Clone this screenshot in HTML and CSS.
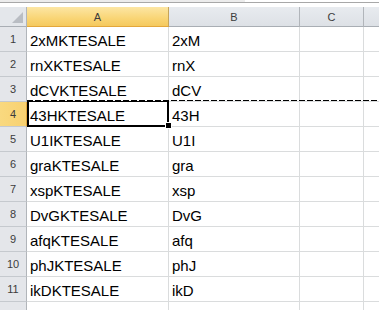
FILE: index.html
```html
<!DOCTYPE html>
<html>
<head>
<meta charset="utf-8">
<link rel="stylesheet" href="styles.css">
</head>
<body>
<div class="topstrip"><div class="tab"></div><div class="rest"></div></div>
<div class="sheet">
  <div class="grid">
    <div class="corner"><span class="tri"></span></div>
    <div class="ch sel">A</div>
    <div class="ch">B</div>
    <div class="ch">C</div>
    <div class="ch last"></div>

    <div class="rh">1</div><div class="c">2xMKTESALE</div><div class="c">2xM</div><div class="c"></div><div class="c last"></div>
    <div class="rh">2</div><div class="c">rnXKTESALE</div><div class="c">rnX</div><div class="c"></div><div class="c last"></div>
    <div class="rh">3</div><div class="c">dCVKTESALE</div><div class="c">dCV</div><div class="c"></div><div class="c last"></div>
    <div class="rh sel">4</div><div class="c active">43HKTESALE<span class="cursor"></span><span class="handle"></span></div><div class="c">43H</div><div class="c"></div><div class="c last"></div>
    <div class="rh">5</div><div class="c">U1IKTESALE</div><div class="c">U1I</div><div class="c"></div><div class="c last"></div>
    <div class="rh">6</div><div class="c">graKTESALE</div><div class="c">gra</div><div class="c"></div><div class="c last"></div>
    <div class="rh">7</div><div class="c">xspKTESALE</div><div class="c">xsp</div><div class="c"></div><div class="c last"></div>
    <div class="rh">8</div><div class="c">DvGKTESALE</div><div class="c">DvG</div><div class="c"></div><div class="c last"></div>
    <div class="rh">9</div><div class="c">afqKTESALE</div><div class="c">afq</div><div class="c"></div><div class="c last"></div>
    <div class="rh">10</div><div class="c">phJKTESALE</div><div class="c">phJ</div><div class="c"></div><div class="c last"></div>
    <div class="rh">11</div><div class="c">ikDKTESALE</div><div class="c">ikD</div><div class="c"></div><div class="c last"></div>
    <div class="rh empty"></div><div class="c empty"></div><div class="c empty"></div><div class="c empty"></div><div class="c last empty"></div>
  </div>
  <div class="marquee"></div>
</div>
</body>
</html>
```

FILE: styles.css
```css
html, body {
  margin: 0;
  padding: 0;
  background: #ffffff;
  overflow: hidden;
}
body {
  width: 379px;
  height: 310px;
  font-family: "Liberation Sans", Arial, sans-serif;
}
.topstrip {
  height: 7px;
  display: flex;
  background: #ffffff;
}
.topstrip .tab {
  width: 245px;
  height: 2px;
  background: #ececec;
  border-bottom: 1px solid #a8a8a8;
}
.topstrip .rest {
  flex: 1;
  height: 2px;
  background: #ffffff;
  border-bottom: 1px solid #a8a8a8;
}
.sheet {
  position: relative;
}
.grid {
  display: grid;
  grid-template-columns: 27px 142px 131px 64px 1fr;
  grid-template-rows: 20px repeat(11, 25px) 8px;
}
.grid > div {
  box-sizing: border-box;
}
.grid > .empty {
  border-bottom: none;
}
.corner {
  position: relative;
  background: #e4e7eb;
  border-right: 1px solid #b1b5ba;
  border-bottom: 1px solid #a9aeb4;
}
.corner .tri {
  position: absolute;
  right: 3px;
  bottom: 3px;
  width: 0;
  height: 0;
  border-left: 11px solid transparent;
  border-bottom: 11px solid #b9bdc3;
}
.ch {
  background: linear-gradient(#e8ebef, #dde1e6);
  border-right: 1px solid #b1b5ba;
  border-bottom: 1px solid #a9aeb4;
  font-size: 11px;
  color: #3c3c3c;
  display: flex;
  align-items: center;
  justify-content: center;
  padding-top: 1px;
}
.ch.sel {
  background: linear-gradient(#fce6a4, #f9d575 60%, #f5c95e);
  border-bottom: 1px solid #e3a73b;
  border-right: 1px solid #c5a45a;
}
.ch.last {
  border-right: none;
}
.rh {
  background: #e4e6ea;
  border-right: 1px solid #b1b5ba;
  border-bottom: 1px solid #c5c9ce;
  font-size: 11px;
  color: #3c3c3c;
  display: flex;
  align-items: flex-end;
  justify-content: center;
  line-height: 13px;
  padding-bottom: 5px;
}
.rh.sel {
  background: linear-gradient(90deg, #f9d97f, #f8d171);
  border-right: 1px solid #e3a73b;
}
.c {
  border-right: 1px solid #dadcdd;
  border-bottom: 1px solid #dadcdd;
  font-size: 15px;
  color: #000000;
  line-height: 17px;
  padding: 0 0 2px 3px;
  display: flex;
  align-items: flex-end;
  white-space: nowrap;
}
.c.last {
  border-right: none;
}
.c.active {
  position: relative;
}
.cursor {
  position: absolute;
  left: 0;
  right: -1px;
  top: -2px;
  bottom: -1px;
  border: 2px solid #000000;
}
.handle {
  position: absolute;
  right: -3px;
  bottom: -2px;
  width: 5px;
  height: 5px;
  background: #000000;
  outline: 1px solid #ffffff;
}
.marquee {
  position: absolute;
  left: 27px;
  right: 0;
  top: 93px;
  height: 1px;
  background: repeating-linear-gradient(90deg, #000000 0 6px, #ffffff 6px 8px);
}
```
